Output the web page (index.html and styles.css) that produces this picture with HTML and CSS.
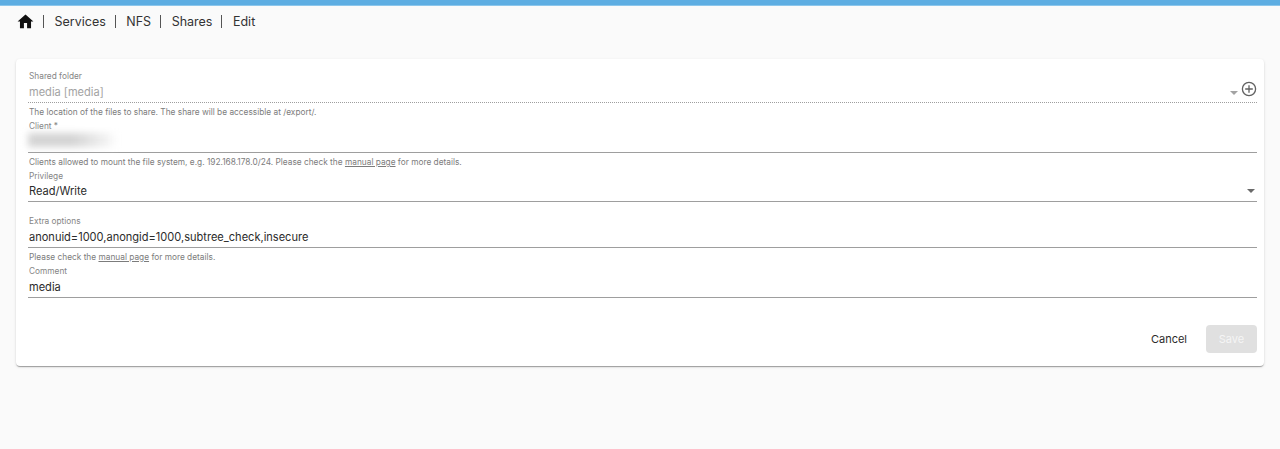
FILE: index.html
```html
<!DOCTYPE html>
<html lang="en">
<head>
<meta charset="utf-8">
<title>Edit NFS share</title>
<link rel="stylesheet" href="styles.css">
</head>
<body>
<div class="topbar"></div>
<nav class="crumbs">
  <svg class="home" viewBox="0 0 24 24" width="19" height="19"><path d="M10 20.5v-6.5h4v6.5h5v-8.5h3L12 3 2 12h3v8.5z"/></svg>
  <span class="sep"></span><span class="crumb">Services</span>
  <span class="sep"></span><span class="crumb">NFS</span>
  <span class="sep"></span><span class="crumb">Shares</span>
  <span class="sep"></span><span class="crumb">Edit</span>
</nav>
<main class="card">
  <div class="field">
    <label class="label">Shared folder</label>
    <div class="control dotted disabled">
      <span class="grow">media [media]</span>
      <span class="caret caret-off"></span>
      <svg class="plus" viewBox="0 0 16 16" width="16" height="16"><circle cx="8" cy="8" r="6.6"/><path d="M8 4.2v7.6M4.2 8h7.6"/></svg>
    </div>
    <p class="hint">The location of the files to share. The share will be accessible at /export/.</p>
  </div>
  <div class="field">
    <label class="label">Client *</label>
    <div class="control"><span class="smear"></span></div>
    <p class="hint">Clients allowed to mount the file system, e.g. 192.168.178.0/24. Please check the <a href="#">manual page</a> for more details.</p>
  </div>
  <div class="field nohint">
    <label class="label">Privilege</label>
    <div class="control short"><span class="grow">Read/Write</span><span class="caret"></span></div>
  </div>
  <div class="field">
    <label class="label">Extra options</label>
    <div class="control"><span>anonuid=1000,anongid=1000,subtree_check,insecure</span></div>
    <p class="hint">Please check the <a href="#">manual page</a> for more details.</p>
  </div>
  <div class="field">
    <label class="label">Comment</label>
    <div class="control"><span>media</span></div>
  </div>
  <div class="actions">
    <button class="btn">Cancel</button>
    <button class="btn save" disabled>Save</button>
  </div>
</main>
</body>
</html>
```
FILE: styles.css
```css
* { box-sizing: border-box; }
html, body { margin: 0; height: 100%; }
body {
  background: #fafafa;
  font-family: Inter, "Liberation Sans", sans-serif;
  color: #212121;
  overflow: hidden;
}
.topbar {
  height: 6px;
  background: #5dade2;
  border-bottom: 1px solid #8cc6eb;
}
.crumbs {
  display: flex;
  align-items: center;
  height: 31px;
  padding-left: 16px;
  font-size: 12.5px;
  color: #333;
}
.home { fill: #111; margin-right: 8px; flex: none; }
.sep {
  width: 1px;
  height: 13px;
  background: #555;
  margin-right: 10.5px;
}
.crumb { margin-right: 9px; }
.card {
  margin: 22px 16px 0;
  height: 307px;
  padding: 11px 7px 0 12px;
  background: #fff;
  border-radius: 4px;
  box-shadow: 0 2px 1px -1px rgba(0,0,0,.2), 0 1px 1px 0 rgba(0,0,0,.14), 0 1px 3px 0 rgba(0,0,0,.12);
}
.field { height: 50px; }
.field.nohint { height: 45px; }
.label {
  display: block;
  padding: 1px 0 0 1px;
  margin-bottom: -1px;
  font-size: 8.3px;
  line-height: 11px;
  color: #858585;
}
.control {
  display: flex;
  align-items: center;
  height: 22px;
  padding-left: 1px;
  border-bottom: 1px solid #9e9e9e;
  font-size: 11.05px;
  color: #2b2b2b;
}
.control.short { height: 21px; }
.dotted { border-bottom: 1px dotted #9e9e9e; }
.disabled { color: #a3a3a3; }
.grow { flex: 1; }
.smear {
  width: 90px;
  height: 14px;
  margin: -4px 0 0 -1px;
  background: linear-gradient(90deg, #d4d4d4 0 50%, #f0f0f0 85%, #fff);
  filter: blur(3.5px);
}
.caret {
  width: 0;
  height: 0;
  border-left: 4.5px solid transparent;
  border-right: 4.5px solid transparent;
  border-top: 4.5px solid #6a6a6a;
  margin-right: 2px;
}
.caret-off { border-top-color: #a3a3a3; margin: 3px 3px 0 0; }
.plus {
  flex: none;
  fill: none;
  stroke: #616161;
  stroke-width: 1.3;
  margin: -5px 0 0 0;
}
.hint {
  margin: 0;
  padding: 2px 0 0 1px;
  font-size: 8.32px;
  line-height: 15px;
  color: #7c7c7c;
}
.hint a { color: inherit; text-decoration: underline; }
.actions {
  display: flex;
  justify-content: flex-end;
  align-items: center;
  gap: 10px;
  padding-top: 10px;
}
.btn {
  height: 28px;
  min-width: 51px;
  padding: 0 9px;
  border: 0;
  border-radius: 4px;
  background: none;
  font: 400 11px Inter, "Liberation Sans", sans-serif;
  color: #2b2b2b;
}
.save { background: #e0e0e0; color: #f5f5f5; }
```
